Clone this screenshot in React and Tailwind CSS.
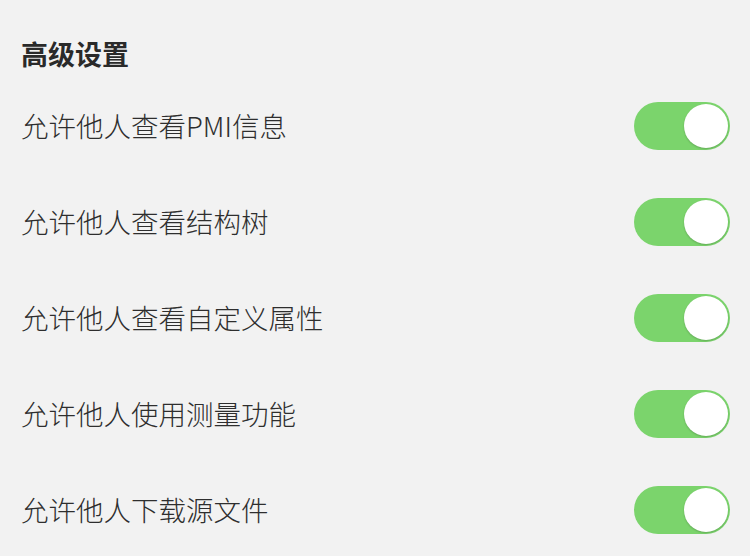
import React, { useState } from "react";

const options = [
  "允许他人查看PMI信息",
  "允许他人查看结构树",
  "允许他人查看自定义属性",
  "允许他人使用测量功能",
  "允许他人下载源文件",
];

const Toggle = ({ on, onChange }) => (
  <button
    onClick={onChange}
    className={`relative h-[48px] w-[96px] rounded-full transition-colors ${on ? "bg-[#7bd46c]" : "bg-[#e3e3e3]"}`}
  >
    <span
      className={`absolute top-[2px] h-[44px] w-[44px] rounded-full bg-white shadow-[0_1px_2px_rgba(0,0,0,0.2)] transition-all ${on ? "left-[50px]" : "left-[2px]"}`}
    />
  </button>
);

export default function App() {
  const [state, setState] = useState(options.map(() => true));

  return (
    <div
      className="min-h-[556px] w-full bg-[#f2f2f2] pl-[21px] pr-[20px] pt-[36px] text-[#333333]"
      style={{ fontFamily: '"Noto Sans CJK SC", "Noto Sans", sans-serif' }}
    >
      <h2 className="h-[36px] text-[27px] font-semibold leading-[36px] text-[#2a2a2a]">高级设置</h2>
      <div className="mt-[6px]">
        {options.map((label, i) => (
          <div key={label} className="flex h-[96px] items-center justify-between">
            <span className="text-[27.5px] font-light leading-none text-[#2e2e2e]">{label}</span>
            <Toggle
              on={state[i]}
              onChange={() => setState(s => s.map((v, j) => (j === i ? !v : v)))}
            />
          </div>
        ))}
      </div>
    </div>
  );
}
